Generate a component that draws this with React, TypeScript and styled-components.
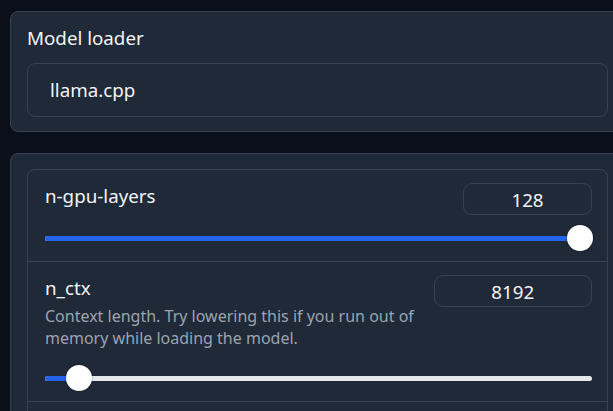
import React from "react";
import styled, { createGlobalStyle } from "styled-components";

const GlobalStyle = createGlobalStyle`
  html, body {
    margin: 0;
    padding: 0;
    background: #0b0f19;
    overflow: hidden;
  }
  body {
    font-family: "Noto Sans", "Open Sans", sans-serif;
    color: #f3f4f6;
  }
`;

const Page = styled.div`
  display: flex;
  flex-direction: column;
  gap: 21px;
  padding: 11px 0 0 10px;
  width: 615px;
`;

const Block = styled.div`
  background: #1f2937;
  border: 1px solid #374151;
  border-radius: 8px;
  padding: 13px 16px 14px 16px;
  display: flex;
  flex-direction: column;
`;

const Label = styled.div`
  font-size: 18.75px;
  line-height: 26px;
  color: #f3f4f6;
`;

const SelectBox = styled.div`
  margin-top: 12px;
  height: 54px;
  box-sizing: border-box;
  border: 1px solid #374151;
  border-radius: 8px;
  background: #1f2937;
  display: flex;
  align-items: center;
  padding: 0 22px 2px 22px;
  font-size: 18.75px;
  color: #f3f4f6;
`;

const SliderGroup = styled.div`
  margin-top: 2px;
  border: 1px solid #374151;
  border-radius: 8px;
  display: flex;
  flex-direction: column;
`;

const Row = styled.div`
  padding: 13px 15px 10px 17px;
  display: flex;
  flex-direction: column;
  min-height: 20px;
  & + & {
    border-top: 1px solid #374151;
  }
`;

const Header = styled.div`
  display: flex;
  justify-content: space-between;
  align-items: flex-start;
`;

const LabelCol = styled.div`
  display: flex;
  flex-direction: column;
`;

const Info = styled.div`
  margin-top: 4px;
  font-size: 16px;
  line-height: 22px;
  color: #9ca3af;
  max-width: 390px;
  padding-bottom: 6px;
`;

const NumberBox = styled.div<{ $w: number }>`
  width: ${(p) => p.$w}px;
  height: 32px;
  box-sizing: border-box;
  border: 1px solid #374151;
  border-radius: 9px;
  display: flex;
  align-items: center;
  justify-content: center;
  font-size: 18.75px;
  color: #f3f4f6;
`;

const Track = styled.div`
  position: relative;
  margin-top: 10px;
  height: 26px;
  display: flex;
  align-items: center;
`;

const Rail = styled.div`
  width: 100%;
  height: 5px;
  border-radius: 3px;
  background: #e5e7eb;
  position: relative;
  overflow: hidden;
`;

const Fill = styled.div`
  position: absolute;
  left: 0;
  top: 0;
  bottom: 0;
  background: #2563eb;
`;

const Thumb = styled.div`
  position: absolute;
  top: 0;
  width: 26px;
  height: 26px;
  margin-left: -13px;
  border-radius: 50%;
  background: #ffffff;
  box-shadow: 0 0 1px 1px rgba(0, 0, 0, 0.15);
`;

function Slider({ frac, width }: { frac: number; width: number }) {
  const center = 13 + frac * (width - 26);
  return (
    <Track>
      <Rail>
        <Fill style={{ width: center }} />
      </Rail>
      <Thumb style={{ left: center }} />
    </Track>
  );
}

export default function App() {
  return (
    <>
      <GlobalStyle />
      <Page>
        <Block>
          <Label>Model loader</Label>
          <SelectBox>llama.cpp</SelectBox>
        </Block>
        <Block>
          <SliderGroup>
            <Row>
              <Header>
                <LabelCol>
                  <Label>n-gpu-layers</Label>
                </LabelCol>
                <NumberBox $w={129}>128</NumberBox>
              </Header>
              <Slider frac={1} width={548} />
            </Row>
            <Row>
              <Header>
                <LabelCol>
                  <Label>n_ctx</Label>
                  <Info>
                    Context length. Try lowering this if you run out of memory while loading the model.
                  </Info>
                </LabelCol>
                <NumberBox $w={159}>8192</NumberBox>
              </Header>
              <Slider frac={0.041} width={548} />
            </Row>
            <Row />
          </SliderGroup>
        </Block>
      </Page>
    </>
  );
}
